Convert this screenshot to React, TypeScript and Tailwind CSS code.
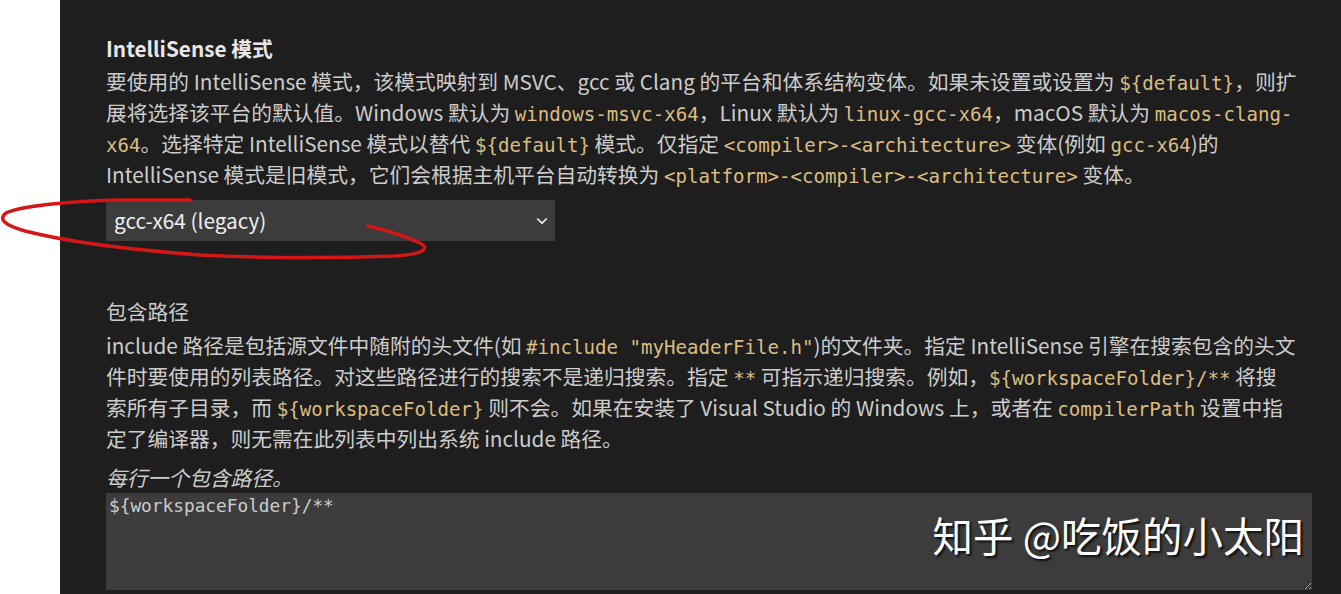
const sans = '[font-family:"Noto_Sans_CJK_SC","Noto_Sans",sans-serif]'

function C({ children }: { children: React.ReactNode }) {
  return <code className="font-['DejaVu_Sans_Mono','Liberation_Mono',monospace] text-[19.1px] text-[#dcbd7e]">{children}</code>
}

function Line({ children }: { children: React.ReactNode }) {
  return <div className="h-[31px] whitespace-nowrap leading-[31px]">{children}</div>
}

export default function App() {
  return (
    <div className={`relative flex h-[594px] w-[1341px] overflow-hidden bg-white ${sans}`}>
      <div className="w-[60px] shrink-0 bg-white" />
      <div className="flex-1 bg-[#1e1e1e] pl-[46px] pr-[29px] pt-[33px] text-[20.75px] text-[#cccccc]">
        {/* IntelliSense mode */}
        <div className="h-[31px] font-semibold leading-[31px] text-[#e7e7e7]">IntelliSense 模式</div>
        <div className="mt-[2px]">
          <Line>
            要使用的 IntelliSense 模式，该模式映射到 MSVC、gcc 或 Clang 的平台和体系结构变体。如果未设置或设置为 <C>{'${default}'}</C>，则扩
          </Line>
          <Line>
            展将选择该平台的默认值。Windows 默认为 <C>windows-msvc-x64</C>，Linux 默认为 <C>linux-gcc-x64</C>，macOS 默认为 <C>macos-clang-</C>
          </Line>
          <Line>
            <C>x64</C>。选择特定 IntelliSense 模式以替代 <C>{'${default}'}</C> 模式。仅指定 <C>{'<compiler>-<architecture>'}</C> 变体(例如 <C>gcc-x64</C>)的
          </Line>
          <Line>
            IntelliSense 模式是旧模式，它们会根据主机平台自动转换为 <C>{'<platform>-<compiler>-<architecture>'}</C> 变体。
          </Line>
        </div>
        <div className="mt-[10px] flex h-[41px] w-[449px] items-center justify-between bg-[#3c3c3c] pl-[8px] pr-[7px] text-[#f0f0f0]">
          <span>gcc-x64 (legacy)</span>
          <svg width="12" height="8" viewBox="0 0 12 8">
            <path d="M1.2 1.5 L6 6.2 L10.8 1.5" fill="none" stroke="#e6e6e6" strokeWidth="1.7" />
          </svg>
        </div>

        {/* include path */}
        <div className="mt-[55px] h-[31px] leading-[31px] text-[#cccccc]">包含路径</div>
        <div className="mt-[3px]">
          <Line>
            include 路径是包括源文件中随附的头文件(如 <C>#include "myHeaderFile.h"</C>)的文件夹。指定 IntelliSense 引擎在搜索包含的头文
          </Line>
          <Line>
            件时要使用的列表路径。对这些路径进行的搜索不是递归搜索。指定 <C>**</C> 可指示递归搜索。例如，<C>{'${workspaceFolder}/**'}</C> 将搜
          </Line>
          <Line>
            索所有子目录，而 <C>{'${workspaceFolder}'}</C> 则不会。如果在安装了 Visual Studio 的 Windows 上，或者在 <C>compilerPath</C> 设置中指
          </Line>
          <Line>定了编译器，则无需在此列表中列出系统 include 路径。</Line>
        </div>
        <div className="mt-[8px] h-[31px] italic leading-[31px]">每行一个包含路径。</div>
        <div className="relative h-[97px] w-full">
          <textarea
            readOnly
            defaultValue={'${workspaceFolder}/**'}
            className="block h-[97px] w-full resize-y bg-[#3c3c3c] px-[3px] pt-[2px] font-['DejaVu_Sans_Mono','Liberation_Mono',monospace] text-[17.8px] leading-[22px] text-[#cccccc] outline-none [color-scheme:dark]"
          />
          <div className="pointer-events-none absolute right-[8px] top-[22px] whitespace-nowrap text-[40.5px] leading-[40px] text-white [text-shadow:2px_2px_2px_#111]">
            知乎 @吃饭的小太阳
          </div>
        </div>
      </div>

      {/* red hand-drawn annotation */}
      <svg className="pointer-events-none absolute left-0 top-0" width="1341" height="594">
        <path
          d="M190,200 L120,200 C70,201 20,206 6,213 C-2,219 4,225 25,231 C60,240 120,249 200,255 C260,258 340,258 395,256 C425,254 430,248 420,243 C405,236 385,230 368,226"
          fill="none"
          stroke="#d41616"
          strokeWidth="3.5"
          strokeLinecap="round"
        />
      </svg>
    </div>
  )
}
